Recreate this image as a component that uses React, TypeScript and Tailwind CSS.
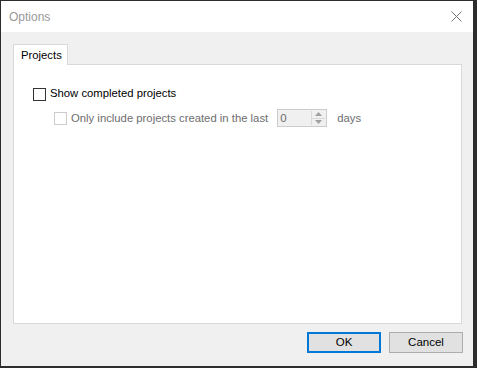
const font = "font-['Liberation_Sans',Arial,sans-serif]";

function CheckBox({ disabled }: { disabled?: boolean }) {
  return (
    <span
      className={`inline-block h-[13px] w-[13px] shrink-0 border bg-white ${
        disabled ? "border-[#cccccc]" : "border-[#333333]"
      }`}
    />
  );
}

function Spinner() {
  return (
    <div className="flex h-[18px] w-[50px] border border-[#cccccc] bg-[#f0f0f0]">
      <span className="flex-1 pl-[2px] text-[11.5px] leading-[16px] text-[#6d6d6d]">0</span>
      <div className="my-px mr-px flex w-[14px] flex-col border-l border-[#dadada]">
        <div className="flex flex-1 items-center justify-center border-b border-[#dadada]">
          <svg width="7" height="4" viewBox="0 0 7 4">
            <path d="M3.5 0 L7 4 L0 4 Z" fill="#a0a0a0" />
          </svg>
        </div>
        <div className="flex flex-1 items-center justify-center">
          <svg width="7" height="4" viewBox="0 0 7 4">
            <path d="M0 0 L7 0 L3.5 4 Z" fill="#a0a0a0" />
          </svg>
        </div>
      </div>
    </div>
  );
}

export default function App() {
  return (
    <div
      className={`${font} flex h-[368px] w-[477px] flex-col border-t border-l border-r-[4px] border-b-[2px] border-[#2d2d2d] bg-[#f0f0f0]`}
    >
      <div className="flex h-[31px] shrink-0 items-center justify-between bg-white pl-[8px] pr-[11px]">
        <span className="text-[12px] text-[#999999]">Options</span>
        <svg width="11" height="11" viewBox="0 0 11 11">
          <path d="M0.5 0.5 L10.5 10.5 M10.5 0.5 L0.5 10.5" stroke="#777777" strokeWidth="1" />
        </svg>
      </div>

      <div className="flex flex-1 flex-col pt-[12px] pl-[12px] pr-[11px] pb-[13px]">
        <div className="flex">
          <div className="relative z-10 -mb-px flex h-[21px] items-start border border-b-0 border-[#d9d9d9] bg-white pl-[7px] pr-[5px] pt-[2px] text-[11.3px] text-black">
            Projects
          </div>
        </div>
        <div className="flex h-[260px] flex-col border border-[#d9d9d9] bg-white pl-[19px] pt-[23px]">
          <div className="flex h-[13px] items-center">
            <CheckBox />
            <span className="ml-[4px] -mt-[2px] text-[11.3px] text-black">Show completed projects</span>
          </div>
          <div className="mt-[8px] flex h-[18px] items-center pl-[21px]">
            <CheckBox disabled />
            <span className="ml-[4px] text-[11.3px] text-[#6d6d6d]">
              Only include projects created in the last
            </span>
            <div className="ml-[9px]">
              <Spinner />
            </div>
            <span className="ml-[10px] text-[11.3px] text-[#6d6d6d]">days</span>
          </div>
        </div>

        <div className="-mr-px mt-[8px] flex justify-end gap-[8px]">
          <button className="h-[21px] w-[74px] border-2 border-[#0078d7] bg-[#e1e1e1] text-[11.5px] text-black">
            OK
          </button>
          <button className="h-[21px] w-[74px] border border-[#adadad] bg-[#e1e1e1] text-[11.5px] text-black">
            Cancel
          </button>
        </div>
      </div>
    </div>
  );
}
